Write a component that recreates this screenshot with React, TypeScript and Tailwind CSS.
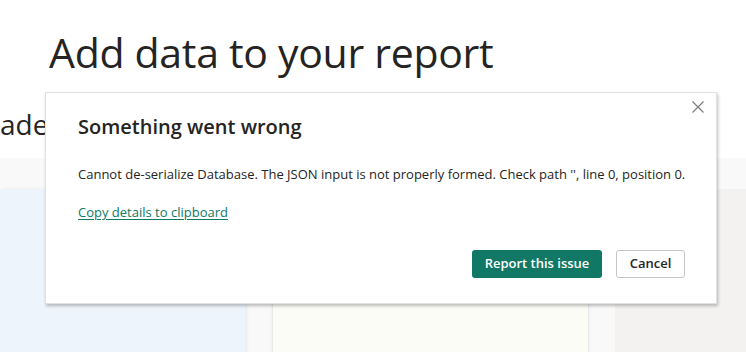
import type React from "react"

const App: React.FC = () => {
  return (
    <div
      className="relative w-[746px] h-[352px] overflow-hidden bg-white text-[#252423]"
      style={{ fontFamily: '"Open Sans", "Noto Sans", sans-serif' }}
    >
      <h1 className="pl-[49px] pt-[24px] text-[41px] leading-[56px] font-normal tracking-[-0.3px]">
        Add data to your report
      </h1>
      <p className="mt-[26px] ml-0 text-[28px] leading-[36px] whitespace-nowrap">ade</p>

      <div className="mt-[16px] h-[200px] bg-[#f9f9f9] pt-[31px]">
        <div className="flex h-full">
          <div className="w-[245px] bg-[#eef4fb] shadow-[2px_0_4px_rgba(0,0,0,0.06)]" />
          <div className="ml-[27px] w-[317px] bg-[#fcfcf6] border-l border-r border-[#e8e8e8] shadow-[0_0_4px_rgba(0,0,0,0.06)]" />
          <div className="ml-[26px] flex-1 bg-[#f3f2f1]" />
        </div>
      </div>

      <div className="absolute left-[45px] top-[92px] w-[672px] h-[212px] bg-white border border-[#e1e1e1] shadow-[1px_2px_3px_rgba(0,0,0,0.25)]">
        <button className="absolute right-[10px] top-[6px] w-[16px] h-[16px] flex items-center justify-center text-[#7a7a7a]">
          <svg width="12" height="12" viewBox="0 0 12 12" fill="none" stroke="currentColor" strokeWidth="1.1">
            <path d="M0.5 0.5L11.5 11.5M11.5 0.5L0.5 11.5" />
          </svg>
        </button>
        <div className="pl-[32px] pt-[20px]">
          <h2 className="text-[20px] leading-[28px] font-semibold">Something went wrong</h2>
          <p className="mt-[23px] text-[13px] leading-[20px] whitespace-nowrap">
            Cannot de-serialize Database. The JSON input is not properly formed. Check path '', line 0, position 0.
          </p>
          <a href="#" className="inline-block mt-[18px] text-[13px] leading-[20px] text-[#117865] underline underline-offset-2">
            Copy details to clipboard
          </a>
        </div>
        <div className="absolute right-[31px] bottom-[25px] flex gap-[14px]">
          <button className="w-[130px] h-[28px] rounded-[3px] bg-[#117865] text-white text-[13px] font-semibold">
            Report this issue
          </button>
          <button className="w-[69px] h-[28px] rounded-[3px] bg-white border border-[#c8c6c4] text-[#252423] text-[13px] font-semibold">
            Cancel
          </button>
        </div>
      </div>
    </div>
  )
}

export default App
